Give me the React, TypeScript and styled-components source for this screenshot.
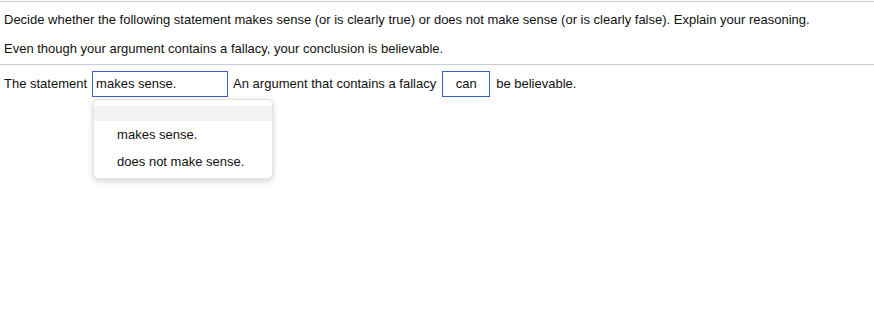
import React from "react";
import styled, { createGlobalStyle } from "styled-components";

const Global = createGlobalStyle`
  html, body { margin: 0; padding: 0; background: #fff; }
  body { font-family: "Liberation Sans", Arial, sans-serif; font-size: 13px; color: #111; }
`;

const Page = styled.div`
  padding-top: 1px;
  min-height: 309px;
`;

const Rule = styled.div`
  height: 1px;
  background: #c9cdd6;
`;

const Para = styled.p<{ $top: number; $bottom: number }>`
  margin: 0;
  padding: ${(p) => p.$top}px 4px ${(p) => p.$bottom}px;
  line-height: 18px;
`;

const Row = styled.div`
  display: flex;
  align-items: center;
  padding: 6px 4px 0;
  line-height: 18px;
`;

const Label = styled.span<{ $left?: number; $right?: number }>`
  margin-left: ${(p) => p.$left ?? 0}px;
  margin-right: ${(p) => p.$right ?? 0}px;
`;

const SelectWrap = styled.div`
  position: relative;
  z-index: 5;
`;

const Box = styled.div<{ $w: number; $center?: boolean }>`
  box-sizing: border-box;
  width: ${(p) => p.$w}px;
  height: 26px;
  border: 1px solid #3a5fcd;
  display: flex;
  align-items: center;
  justify-content: ${(p) => (p.$center ? "center" : "flex-start")};
  padding: 0 3px;
`;

const Menu = styled.div`
  position: absolute;
  z-index: 10;
  left: 1px;
  top: 28px;
  width: 180px;
  height: 80px;
  box-sizing: border-box;
  background: #fff;
  border: 1px solid #e2e2e2;
  border-radius: 5px;
  box-shadow: 0 2px 6px rgba(0, 0, 0, 0.18);
  padding-top: 6px;
`;

const Band = styled.div`
  height: 15px;
  background: #f2f2f2;
`;

const Option = styled.div`
  height: 27px;
  display: flex;
  align-items: center;
  padding-left: 23px;
  white-space: nowrap;
`;

export default function App() {
  return (
    <>
      <Global />
      <Page>
        <Rule />
        <Para $top={9} $bottom={5}>
          Decide whether the following statement makes sense (or is clearly true) or does not make sense (or is clearly
          false). Explain your reasoning.
        </Para>
        <Para $top={6} $bottom={6}>
          Even though your argument contains a fallacy, your conclusion is believable.
        </Para>
        <Rule />
        <Row>
          <Label $right={5}>The statement</Label>
          <SelectWrap>
            <Box $w={136}>makes sense.</Box>
            <Menu role="listbox">
              <Band />
              <Option>makes sense.</Option>
              <Option>does not make sense.</Option>
            </Menu>
          </SelectWrap>
          <Label $left={5} $right={6}>
            An argument that contains a fallacy
          </Label>
          <Box $w={48} $center>
            can
          </Box>
          <Label $left={6}>be believable.</Label>
        </Row>
      </Page>
    </>
  );
}
